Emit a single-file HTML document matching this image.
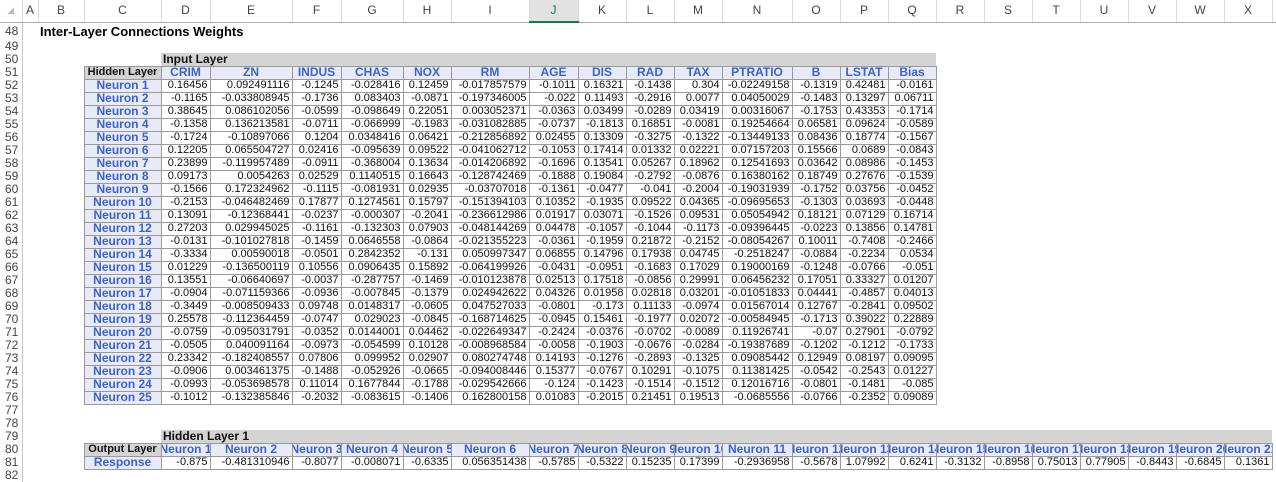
<!DOCTYPE html>
<html><head><meta charset="utf-8"><style>
body{margin:0;background:#fff;width:1276px;height:475px;overflow:hidden;font-family:"Liberation Sans",Arial,sans-serif;}
table{border-collapse:collapse;table-layout:fixed;width:1276px;font-size:11px;}
tr{height:13px}
td,th{padding:0 2px;white-space:nowrap;overflow:hidden;line-height:11px;font-weight:normal;}
th.r{text-align:left;color:#444;font-size:12px;padding-left:5px;border-right:1px solid #c8c8c8;}
tr.ch td{height:21px;text-align:center;color:#444;font-size:12px;border-right:1px solid #dadada;border-bottom:1px solid #ababab;background:#fff}
tr.ch td.sel{background:#e2e2e2;color:#217346;border-bottom:2px solid #217346}
td.n{text-align:right;border:1px solid #9a9a9a;color:#111}
td.h{text-align:center;background:#e8eaf8;color:#3b63c8;font-weight:bold;border:1px solid #9a9a9a;font-size:12px}
td.g{background:#d4d4d4;font-weight:bold;color:#111;font-size:12px}
td.gc{background:#d4d4d4;font-weight:bold;color:#111;font-size:11px;border:1px solid #9a9a9a;text-align:center;padding:0}
td.c{padding:0;border:1px solid #9a9a9a;background:#e8eaf8;color:#3b63c8;font-weight:bold;font-size:12px}
td.c div{display:flex;justify-content:center;overflow:hidden;white-space:nowrap}
</style></head><body>
<table>
<colgroup><col style="width:22px"><col style="width:16px"><col style="width:46px"><col style="width:77px"><col style="width:49px"><col style="width:82px"><col style="width:49px"><col style="width:62px"><col style="width:48px"><col style="width:78px"><col style="width:49px"><col style="width:48px"><col style="width:48px"><col style="width:48px"><col style="width:70px"><col style="width:48px"><col style="width:48px"><col style="width:48px"><col style="width:48px"><col style="width:48px"><col style="width:48px"><col style="width:48px"><col style="width:48px"><col style="width:48px"><col style="width:48px"><col style="width:4px"></colgroup>
<tr class="ch" style="height:22px"><td style="color:#bbb;font-size:9px">◢</td><td>A</td><td>B</td><td>C</td><td>D</td><td>E</td><td>F</td><td>G</td><td>H</td><td>I</td><td class="sel">J</td><td>K</td><td>L</td><td>M</td><td>N</td><td>O</td><td>P</td><td>Q</td><td>R</td><td>S</td><td>T</td><td>U</td><td>V</td><td>W</td><td>X</td><td></td></tr>
<tr style="height:18px"><th class="r">48</th><td></td><td colspan="6" style="font-weight:bold;font-size:13px;overflow:visible;line-height:17px">Inter-Layer Connections Weights</td></tr>
<tr><th class="r">49</th></tr>
<tr><th class="r">50</th><td></td><td></td><td></td><td class="g" colspan="14">Input Layer</td></tr>
<tr><th class="r">51</th><td></td><td></td><td class="gc">Hidden Layer</td><td class="h">CRIM</td><td class="h">ZN</td><td class="h">INDUS</td><td class="h">CHAS</td><td class="h">NOX</td><td class="h">RM</td><td class="h">AGE</td><td class="h">DIS</td><td class="h">RAD</td><td class="h">TAX</td><td class="h">PTRATIO</td><td class="h">B</td><td class="h">LSTAT</td><td class="h">Bias</td></tr>
<tr><th class="r">52</th><td></td><td></td><td class="h">Neuron 1</td><td class="n">0.16456</td><td class="n">0.092491116</td><td class="n">-0.1245</td><td class="n">-0.028416</td><td class="n">0.12459</td><td class="n">-0.017857579</td><td class="n">-0.1011</td><td class="n">0.16321</td><td class="n">-0.1438</td><td class="n">0.304</td><td class="n">-0.02249158</td><td class="n">-0.1319</td><td class="n">0.42481</td><td class="n">-0.0161</td></tr>
<tr><th class="r">53</th><td></td><td></td><td class="h">Neuron 2</td><td class="n">-0.1165</td><td class="n">-0.033808945</td><td class="n">-0.1736</td><td class="n">0.083403</td><td class="n">-0.0871</td><td class="n">-0.197346005</td><td class="n">-0.022</td><td class="n">0.11493</td><td class="n">-0.2916</td><td class="n">0.0077</td><td class="n">0.04050029</td><td class="n">-0.1483</td><td class="n">0.13297</td><td class="n">0.06711</td></tr>
<tr><th class="r">54</th><td></td><td></td><td class="h">Neuron 3</td><td class="n">0.38645</td><td class="n">0.086102056</td><td class="n">-0.0599</td><td class="n">-0.098649</td><td class="n">0.22051</td><td class="n">0.003052371</td><td class="n">-0.0363</td><td class="n">0.03499</td><td class="n">-0.0289</td><td class="n">0.03419</td><td class="n">0.00316067</td><td class="n">-0.1753</td><td class="n">0.43353</td><td class="n">-0.1714</td></tr>
<tr><th class="r">55</th><td></td><td></td><td class="h">Neuron 4</td><td class="n">-0.1358</td><td class="n">0.136213581</td><td class="n">-0.0711</td><td class="n">-0.066999</td><td class="n">-0.1983</td><td class="n">-0.031082885</td><td class="n">-0.0737</td><td class="n">-0.1813</td><td class="n">0.16851</td><td class="n">-0.0081</td><td class="n">0.19254664</td><td class="n">0.06581</td><td class="n">0.09624</td><td class="n">-0.0589</td></tr>
<tr><th class="r">56</th><td></td><td></td><td class="h">Neuron 5</td><td class="n">-0.1724</td><td class="n">-0.10897066</td><td class="n">0.1204</td><td class="n">0.0348416</td><td class="n">0.06421</td><td class="n">-0.212856892</td><td class="n">0.02455</td><td class="n">0.13309</td><td class="n">-0.3275</td><td class="n">-0.1322</td><td class="n">-0.13449133</td><td class="n">0.08436</td><td class="n">0.18774</td><td class="n">-0.1567</td></tr>
<tr><th class="r">57</th><td></td><td></td><td class="h">Neuron 6</td><td class="n">0.12205</td><td class="n">0.065504727</td><td class="n">0.02416</td><td class="n">-0.095639</td><td class="n">0.09522</td><td class="n">-0.041062712</td><td class="n">-0.1053</td><td class="n">0.17414</td><td class="n">0.01332</td><td class="n">0.02221</td><td class="n">0.07157203</td><td class="n">0.15566</td><td class="n">0.0689</td><td class="n">-0.0843</td></tr>
<tr><th class="r">58</th><td></td><td></td><td class="h">Neuron 7</td><td class="n">0.23899</td><td class="n">-0.119957489</td><td class="n">-0.0911</td><td class="n">-0.368004</td><td class="n">0.13634</td><td class="n">-0.014206892</td><td class="n">-0.1696</td><td class="n">0.13541</td><td class="n">0.05267</td><td class="n">0.18962</td><td class="n">0.12541693</td><td class="n">0.03642</td><td class="n">0.08986</td><td class="n">-0.1453</td></tr>
<tr><th class="r">59</th><td></td><td></td><td class="h">Neuron 8</td><td class="n">0.09173</td><td class="n">0.0054263</td><td class="n">0.02529</td><td class="n">0.1140515</td><td class="n">0.16643</td><td class="n">-0.128742469</td><td class="n">-0.1888</td><td class="n">0.19084</td><td class="n">-0.2792</td><td class="n">-0.0876</td><td class="n">0.16380162</td><td class="n">0.18749</td><td class="n">0.27676</td><td class="n">-0.1539</td></tr>
<tr><th class="r">60</th><td></td><td></td><td class="h">Neuron 9</td><td class="n">-0.1566</td><td class="n">0.172324962</td><td class="n">-0.1115</td><td class="n">-0.081931</td><td class="n">0.02935</td><td class="n">-0.03707018</td><td class="n">-0.1361</td><td class="n">-0.0477</td><td class="n">-0.041</td><td class="n">-0.2004</td><td class="n">-0.19031939</td><td class="n">-0.1752</td><td class="n">0.03756</td><td class="n">-0.0452</td></tr>
<tr><th class="r">61</th><td></td><td></td><td class="h">Neuron 10</td><td class="n">-0.2153</td><td class="n">-0.046482469</td><td class="n">0.17877</td><td class="n">0.1274561</td><td class="n">0.15797</td><td class="n">-0.151394103</td><td class="n">0.10352</td><td class="n">-0.1935</td><td class="n">0.09522</td><td class="n">0.04365</td><td class="n">-0.09695653</td><td class="n">-0.1303</td><td class="n">0.03693</td><td class="n">-0.0448</td></tr>
<tr><th class="r">62</th><td></td><td></td><td class="h">Neuron 11</td><td class="n">0.13091</td><td class="n">-0.12368441</td><td class="n">-0.0237</td><td class="n">-0.000307</td><td class="n">-0.2041</td><td class="n">-0.236612986</td><td class="n">0.01917</td><td class="n">0.03071</td><td class="n">-0.1526</td><td class="n">0.09531</td><td class="n">0.05054942</td><td class="n">0.18121</td><td class="n">0.07129</td><td class="n">0.16714</td></tr>
<tr><th class="r">63</th><td></td><td></td><td class="h">Neuron 12</td><td class="n">0.27203</td><td class="n">0.029945025</td><td class="n">-0.1161</td><td class="n">-0.132303</td><td class="n">0.07903</td><td class="n">-0.048144269</td><td class="n">0.04478</td><td class="n">-0.1057</td><td class="n">-0.1044</td><td class="n">-0.1173</td><td class="n">-0.09396445</td><td class="n">-0.0223</td><td class="n">0.13856</td><td class="n">0.14781</td></tr>
<tr><th class="r">64</th><td></td><td></td><td class="h">Neuron 13</td><td class="n">-0.0131</td><td class="n">-0.101027818</td><td class="n">-0.1459</td><td class="n">0.0646558</td><td class="n">-0.0864</td><td class="n">-0.021355223</td><td class="n">-0.0361</td><td class="n">-0.1959</td><td class="n">0.21872</td><td class="n">-0.2152</td><td class="n">-0.08054267</td><td class="n">0.10011</td><td class="n">-0.7408</td><td class="n">-0.2466</td></tr>
<tr><th class="r">65</th><td></td><td></td><td class="h">Neuron 14</td><td class="n">-0.3334</td><td class="n">0.00590018</td><td class="n">-0.0501</td><td class="n">0.2842352</td><td class="n">-0.131</td><td class="n">0.050997347</td><td class="n">0.06855</td><td class="n">0.14796</td><td class="n">0.17938</td><td class="n">0.04745</td><td class="n">-0.2518247</td><td class="n">-0.0884</td><td class="n">-0.2234</td><td class="n">0.0534</td></tr>
<tr><th class="r">66</th><td></td><td></td><td class="h">Neuron 15</td><td class="n">0.01229</td><td class="n">-0.136500119</td><td class="n">0.10556</td><td class="n">0.0906435</td><td class="n">0.15892</td><td class="n">-0.064199926</td><td class="n">-0.0431</td><td class="n">-0.0951</td><td class="n">-0.1683</td><td class="n">0.17029</td><td class="n">0.19000169</td><td class="n">-0.1248</td><td class="n">-0.0766</td><td class="n">-0.051</td></tr>
<tr><th class="r">67</th><td></td><td></td><td class="h">Neuron 16</td><td class="n">0.13551</td><td class="n">-0.06640697</td><td class="n">-0.0037</td><td class="n">-0.287757</td><td class="n">-0.1469</td><td class="n">-0.010123878</td><td class="n">0.02513</td><td class="n">0.17518</td><td class="n">-0.0856</td><td class="n">0.29991</td><td class="n">0.06456232</td><td class="n">0.17051</td><td class="n">0.33327</td><td class="n">0.01207</td></tr>
<tr><th class="r">68</th><td></td><td></td><td class="h">Neuron 17</td><td class="n">-0.0904</td><td class="n">-0.071159366</td><td class="n">-0.0936</td><td class="n">-0.007845</td><td class="n">-0.1379</td><td class="n">0.024942622</td><td class="n">0.04326</td><td class="n">0.01958</td><td class="n">0.02818</td><td class="n">0.03201</td><td class="n">-0.01051833</td><td class="n">0.04441</td><td class="n">-0.4857</td><td class="n">0.04013</td></tr>
<tr><th class="r">69</th><td></td><td></td><td class="h">Neuron 18</td><td class="n">-0.3449</td><td class="n">-0.008509433</td><td class="n">0.09748</td><td class="n">0.0148317</td><td class="n">-0.0605</td><td class="n">0.047527033</td><td class="n">-0.0801</td><td class="n">-0.173</td><td class="n">0.11133</td><td class="n">-0.0974</td><td class="n">0.01567014</td><td class="n">0.12767</td><td class="n">-0.2841</td><td class="n">0.09502</td></tr>
<tr><th class="r">70</th><td></td><td></td><td class="h">Neuron 19</td><td class="n">0.25578</td><td class="n">-0.112364459</td><td class="n">-0.0747</td><td class="n">0.029023</td><td class="n">-0.0845</td><td class="n">-0.168714625</td><td class="n">-0.0945</td><td class="n">0.15461</td><td class="n">-0.1977</td><td class="n">0.02072</td><td class="n">-0.00584945</td><td class="n">-0.1713</td><td class="n">0.39022</td><td class="n">0.22889</td></tr>
<tr><th class="r">71</th><td></td><td></td><td class="h">Neuron 20</td><td class="n">-0.0759</td><td class="n">-0.095031791</td><td class="n">-0.0352</td><td class="n">0.0144001</td><td class="n">0.04462</td><td class="n">-0.022649347</td><td class="n">-0.2424</td><td class="n">-0.0376</td><td class="n">-0.0702</td><td class="n">-0.0089</td><td class="n">0.11926741</td><td class="n">-0.07</td><td class="n">0.27901</td><td class="n">-0.0792</td></tr>
<tr><th class="r">72</th><td></td><td></td><td class="h">Neuron 21</td><td class="n">-0.0505</td><td class="n">0.040091164</td><td class="n">-0.0973</td><td class="n">-0.054599</td><td class="n">0.10128</td><td class="n">-0.008968584</td><td class="n">-0.0058</td><td class="n">-0.1903</td><td class="n">-0.0676</td><td class="n">-0.0284</td><td class="n">-0.19387689</td><td class="n">-0.1202</td><td class="n">-0.1212</td><td class="n">-0.1733</td></tr>
<tr><th class="r">73</th><td></td><td></td><td class="h">Neuron 22</td><td class="n">0.23342</td><td class="n">-0.182408557</td><td class="n">0.07806</td><td class="n">0.099952</td><td class="n">0.02907</td><td class="n">0.080274748</td><td class="n">0.14193</td><td class="n">-0.1276</td><td class="n">-0.2893</td><td class="n">-0.1325</td><td class="n">0.09085442</td><td class="n">0.12949</td><td class="n">0.08197</td><td class="n">0.09095</td></tr>
<tr><th class="r">74</th><td></td><td></td><td class="h">Neuron 23</td><td class="n">-0.0906</td><td class="n">0.003461375</td><td class="n">-0.1488</td><td class="n">-0.052926</td><td class="n">-0.0665</td><td class="n">-0.094008446</td><td class="n">0.15377</td><td class="n">-0.0767</td><td class="n">0.10291</td><td class="n">-0.1075</td><td class="n">0.11381425</td><td class="n">-0.0542</td><td class="n">-0.2543</td><td class="n">0.01227</td></tr>
<tr><th class="r">75</th><td></td><td></td><td class="h">Neuron 24</td><td class="n">-0.0993</td><td class="n">-0.053698578</td><td class="n">0.11014</td><td class="n">0.1677844</td><td class="n">-0.1788</td><td class="n">-0.029542666</td><td class="n">-0.124</td><td class="n">-0.1423</td><td class="n">-0.1514</td><td class="n">-0.1512</td><td class="n">0.12016716</td><td class="n">-0.0801</td><td class="n">-0.1481</td><td class="n">-0.085</td></tr>
<tr><th class="r">76</th><td></td><td></td><td class="h">Neuron 25</td><td class="n">-0.1012</td><td class="n">-0.132385846</td><td class="n">-0.2032</td><td class="n">-0.083615</td><td class="n">-0.1406</td><td class="n">0.162800158</td><td class="n">0.01083</td><td class="n">-0.2015</td><td class="n">0.21451</td><td class="n">0.19513</td><td class="n">-0.0685556</td><td class="n">-0.0766</td><td class="n">-0.2352</td><td class="n">0.09089</td></tr>
<tr><th class="r">77</th></tr>
<tr><th class="r">78</th></tr>
<tr><th class="r">79</th><td></td><td></td><td></td><td class="g" colspan="21">Hidden Layer 1</td></tr>
<tr><th class="r">80</th><td></td><td></td><td class="gc">Output Layer</td><td class="c"><div>Neuron 1</div></td><td class="c"><div>Neuron 2</div></td><td class="c"><div>Neuron 3</div></td><td class="c"><div>Neuron 4</div></td><td class="c"><div>Neuron 5</div></td><td class="c"><div>Neuron 6</div></td><td class="c"><div>Neuron 7</div></td><td class="c"><div>Neuron 8</div></td><td class="c"><div>Neuron 9</div></td><td class="c"><div>Neuron 10</div></td><td class="c"><div>Neuron 11</div></td><td class="c"><div>Neuron 12</div></td><td class="c"><div>Neuron 13</div></td><td class="c"><div>Neuron 14</div></td><td class="c"><div>Neuron 15</div></td><td class="c"><div>Neuron 16</div></td><td class="c"><div>Neuron 17</div></td><td class="c"><div>Neuron 18</div></td><td class="c"><div>Neuron 19</div></td><td class="c"><div>Neuron 20</div></td><td class="c"><div>Neuron 21</div></td></tr>
<tr><th class="r">81</th><td></td><td></td><td class="h">Response</td><td class="n">-0.875</td><td class="n">-0.481310946</td><td class="n">-0.8077</td><td class="n">-0.008071</td><td class="n">-0.6335</td><td class="n">0.056351438</td><td class="n">-0.5785</td><td class="n">-0.5322</td><td class="n">0.15235</td><td class="n">0.17399</td><td class="n">-0.2936958</td><td class="n">-0.5678</td><td class="n">1.07992</td><td class="n">0.6241</td><td class="n">-0.3132</td><td class="n">-0.8958</td><td class="n">0.75013</td><td class="n">0.77905</td><td class="n">-0.8443</td><td class="n">-0.6845</td><td class="n">0.1361</td></tr>
<tr><th class="r">82</th></tr>
</table>
</body></html>
